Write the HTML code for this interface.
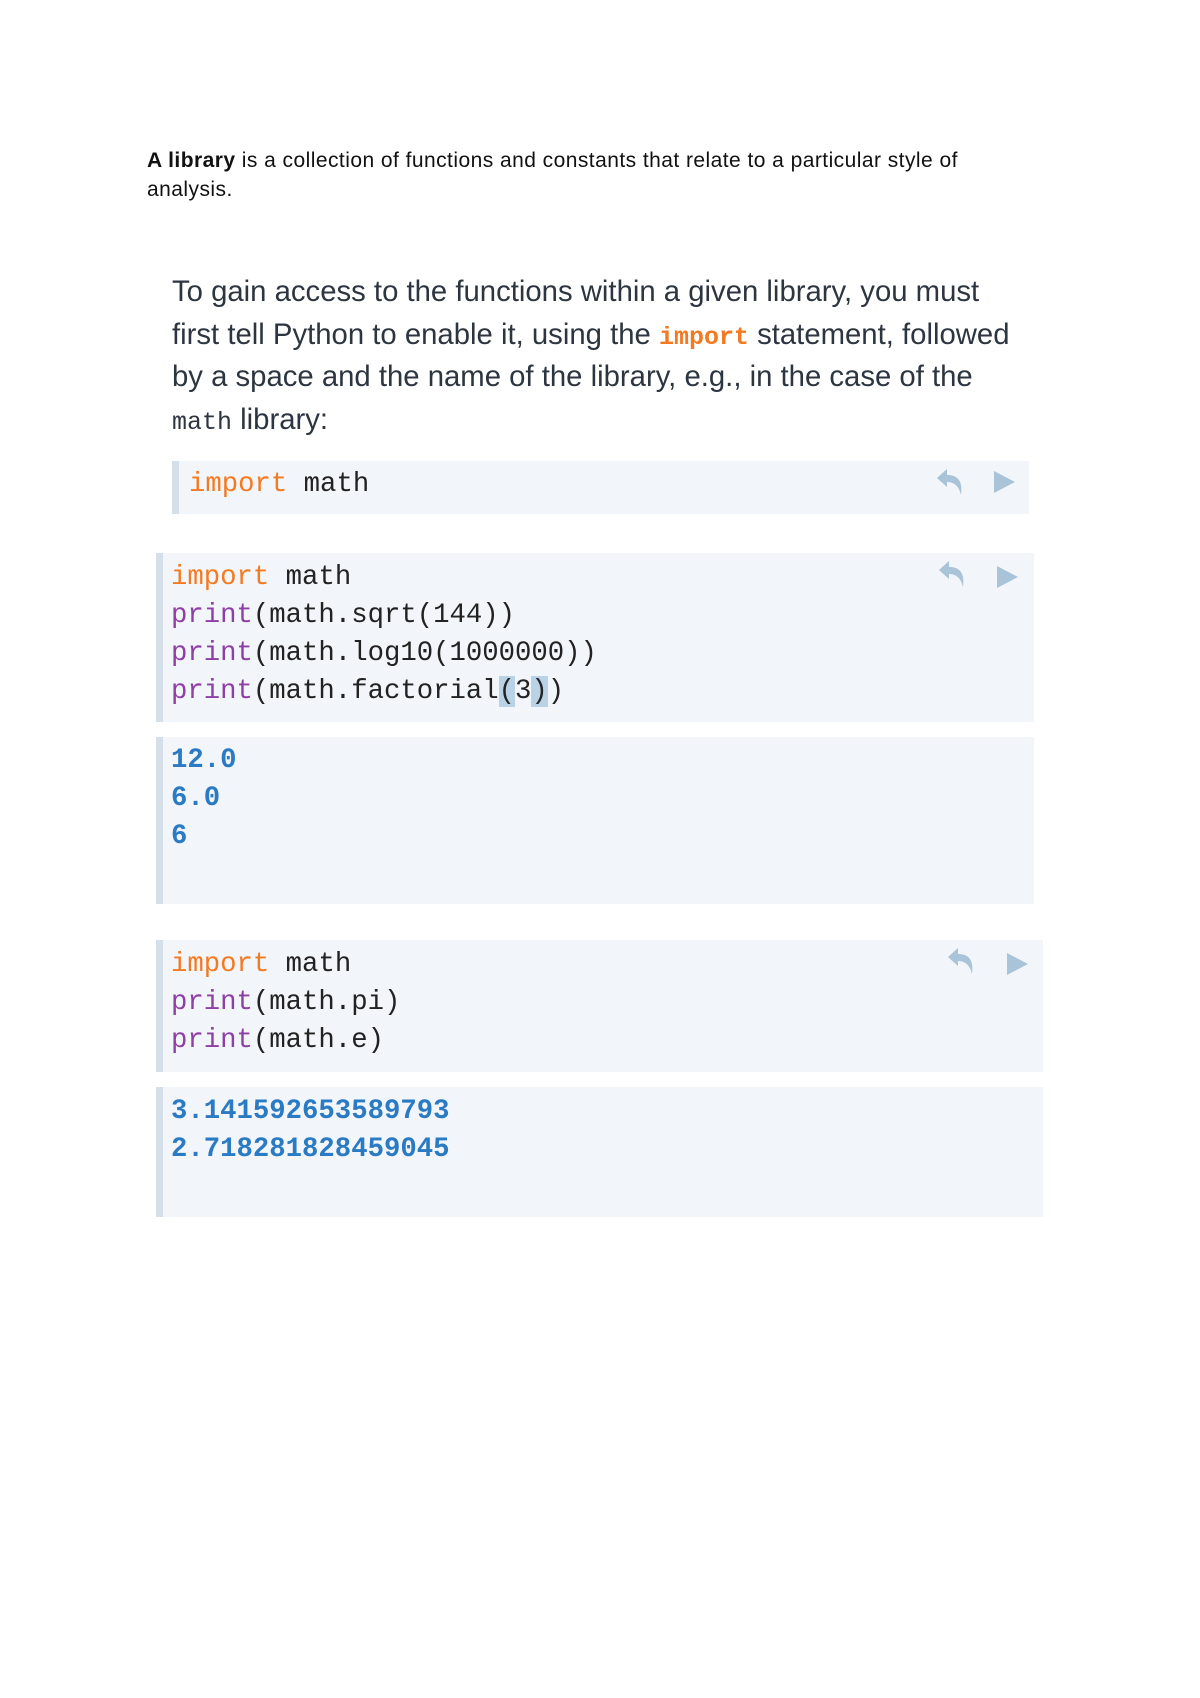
<!DOCTYPE html>
<html><head><meta charset="utf-8"><style>
body{margin:0;width:1200px;height:1698px;background:#fff;position:relative;overflow:hidden}
.a{position:absolute}
.p1{font-family:"Liberation Sans",sans-serif;font-size:21px;letter-spacing:0.45px;color:#111;left:147px;top:146px;line-height:29px;width:1000px}
.p2{font-family:"Liberation Sans",sans-serif;font-size:29.3px;color:#2d3540;left:172px;top:271px;line-height:42.5px;width:1000px}
.p2 .m{font-family:'Liberation Mono',monospace;font-size:25px;line-height:0}
.box{position:absolute;background:#f2f5f9;border-left:7px solid #d4dfe9;box-sizing:border-box}
.code{position:absolute;font-family:"Liberation Mono",monospace;font-size:27.3px;line-height:38px;color:#222;white-space:pre}
.k{color:#f47a22}.f{color:#8e3fa5}.o{color:#2a7ac4;font-weight:bold}
.hl{background:#b9d2e6}
</style></head><body>
<div class="a p1"><b>A library</b> is a collection of functions and constants that relate to a particular style of<br>analysis.</div>
<div class="a p2">To gain access to the functions within a given library, you must<br>first tell Python to enable it, using the <span class="m" style="color:#f47a22;font-weight:bold">import</span> statement, followed<br>by a space and the name of the library, e.g., in the case of the<br><span class="m">math</span> library:</div>

<div class="box" style="left:172px;top:461px;width:857px;height:53px"></div>
<div class="code" style="left:189px;top:466px"><span class="k">import</span> math</div>

<div class="box" style="left:156px;top:553px;width:878px;height:169px"></div>
<div class="code" style="left:171px;top:559px"><span class="k">import</span> math
<span class="f">print</span>(math.sqrt(144))
<span class="f">print</span>(math.log10(1000000))
<span class="f">print</span>(math.factorial<span class="hl">(</span>3<span class="hl">)</span>)</div>

<div class="box" style="left:156px;top:737px;width:878px;height:167px"></div>
<div class="code o" style="left:171px;top:742px">12.0
6.0
6</div>

<div class="box" style="left:156px;top:940px;width:887px;height:132px"></div>
<div class="code" style="left:171px;top:946px"><span class="k">import</span> math
<span class="f">print</span>(math.pi)
<span class="f">print</span>(math.e)</div>

<div class="box" style="left:156px;top:1087px;width:887px;height:130px"></div>
<div class="code o" style="left:171px;top:1093px">3.141592653589793
2.718281828459045</div>

<svg class="a" style="left:0;top:0" width="1200" height="1698">
<g fill="#a9c3d8">
<g transform="translate(937,468)"><path d="M0 10 L10 1 L10 7 C20 7 26 12 24 27 C22 18 17 14 10 14 L10 19 Z"/></g>
<path d="M994 471 L1015 482 L994 493 Z"/>
<g transform="translate(939,560)"><path d="M0 10 L10 1 L10 7 C20 7 26 12 24 27 C22 18 17 14 10 14 L10 19 Z"/></g>
<path d="M997 566 L1018 577 L997 588 Z"/>
<g transform="translate(948,947)"><path d="M0 10 L10 1 L10 7 C20 7 26 12 24 27 C22 18 17 14 10 14 L10 19 Z"/></g>
<path d="M1007 953 L1028 964 L1007 975 Z"/>
</g>
</svg>
</body></html>
